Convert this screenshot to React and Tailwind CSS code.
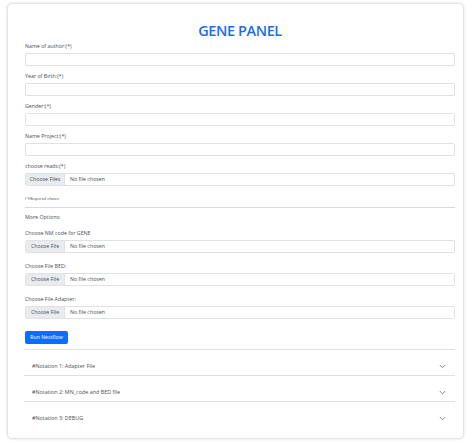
import React from 'react';

function Label({ children, className = '' }) {
    return (
        <div className={`h-[8px] leading-[8px] text-[5.3px] text-[#4a4f54] ${className}`}>{children}</div>
    );
}

function TextInput() {
    return <div className="mt-[3px] h-[13px] w-full rounded-[2px] border border-[#dee2e6] bg-white" />;
}

function FileInput({ button = 'Choose File' }) {
    return (
        <div className="mt-[3px] flex h-[13px] w-full items-stretch overflow-hidden rounded-[2px] border border-[#dee2e6] bg-white text-[5.3px] text-[#4a4f54]">
            <div className="flex w-[39px] items-center justify-center border-r border-[#dee2e6] bg-[#e9ecef]">{button}</div>
            <div className="flex items-center pl-[5px]">No file chosen</div>
        </div>
    );
}

function Chevron() {
    return (
        <svg width="7" height="5" viewBox="0 0 7 5" fill="none" stroke="#6b7075" strokeWidth="0.8">
            <path d="M0.8 1l2.7 2.8L6.2 1" />
        </svg>
    );
}

export default function App() {
    const notes = ['#Notation 1: Adapter File', '#Notation 2: MN_code and BED file', '#Notation 3: DEBUG'];

    return (
        <div className="h-[443px] w-[474px] bg-white pl-[7px] pt-[3px]" style={{ fontFamily: '"Open Sans", "Noto Sans", sans-serif' }}>
            <div className="h-[436px] w-[457px] rounded-[5px] border border-[#e3e3e3] bg-white pl-[17px] pr-[8px] pt-[17px] shadow-[0_0_3px_rgba(0,0,0,0.12)]">
                {/* Header */}
                <h1 className="h-[20px] text-center text-[14.5px] font-semibold leading-[20px] tracking-[-0.4px] text-[#1a6fe3]">GENE PANEL</h1>

                {/* Required fields */}
                <Label className="mt-[1px]">Name of author:(*)</Label>
                <TextInput />
                <Label className="mt-[6px]">Year of Birth:(*)</Label>
                <TextInput />
                <Label className="mt-[6px]">Gender:(*)</Label>
                <TextInput />
                <Label className="mt-[6px]">Name Project:(*)</Label>
                <TextInput />
                <Label className="mt-[6px]">choose reads:(*)</Label>
                <FileInput button="Choose Files" />
                <div className="mt-[10px] h-[6px] text-[4.2px] italic leading-[6px] text-[#4a4f54]">(*)Required choice</div>
                <div className="mt-[5px] border-t border-[#dcdcdc]" />

                {/* More options */}
                <Label className="mt-[5px]">More Options:</Label>
                <Label className="mt-[8px]">Choose NM code for GENE</Label>
                <FileInput />
                <Label className="mt-[9px]">Choose File BED:</Label>
                <FileInput />
                <Label className="mt-[9px]">Choose File Adapter:</Label>
                <FileInput />

                <button className="mt-[12px] flex h-[13px] w-[43px] items-center justify-center rounded-[2px] bg-[#0d6efd] text-[5.2px] text-white">
                    Run Nextflow
                </button>

                {/* Accordion */}
                <div className="-ml-[1px] mt-[5px] border-t border-[#e0e0e0]">
                    {notes.map((n, i) => (
                        <div
                            key={n}
                            className={`flex h-[26px] items-center justify-between pl-[8px] pr-[9px] pt-[7px] text-[5.4px] text-[#4a4f54] ${i < 2 ? 'border-b border-[#e0e0e0]' : ''}`}
                        >
                            <span>{n}</span>
                            <Chevron />
                        </div>
                    ))}
                </div>
            </div>
        </div>
    );
}
